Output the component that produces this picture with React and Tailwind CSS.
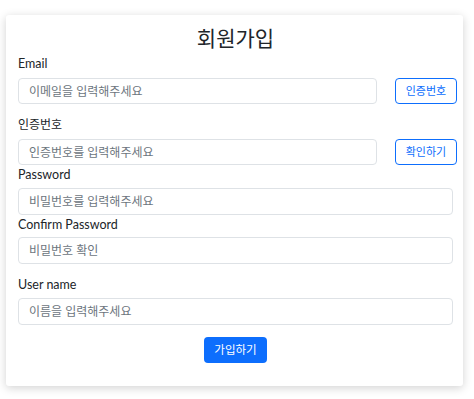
export default function App() {
  return (
    <div
      className="min-h-screen bg-white pt-[15px] pl-[6px]"
      style={{ fontFamily: 'Lato, "Noto Sans CJK KR", sans-serif' }}
    >
      {/* Card */}
      <div className="w-[457px] rounded-[3px] bg-white pt-[7px] pr-[10px] pb-[23px] pl-[12px] shadow-[0_2px_10px_rgba(0,0,0,0.18)]">
        <h1 className="h-[32px] text-center text-[21px] leading-[32px] text-[#212529]">회원가입</h1>

        {/* Email */}
        <label className="block h-[20px] text-[12.5px] leading-[20px] text-[#212529]">Email</label>
        <div className="mt-[4px] flex items-center">
          <input
            type="email"
            placeholder="이메일을 입력해주세요"
            className="h-[26px] w-[359px] shrink-0 rounded-[4px] border border-[#dee2e6] px-[10px] text-[12px] text-[#212529] outline-none placeholder:text-[#6c757d]"
          />
          <button className="ml-[18px] h-[26px] w-[62px] shrink-0 rounded-[4px] border border-[#0d6efd] text-[11px] text-[#0d6efd]">
            인증번호
          </button>
        </div>

        {/* Verification code */}
        <label className="mt-[11px] block h-[20px] text-[12px] leading-[20px] text-[#212529]">인증번호</label>
        <div className="mt-[4px] flex items-center">
          <input
            type="text"
            placeholder="인증번호를 입력해주세요"
            className="h-[26px] w-[359px] shrink-0 rounded-[4px] border border-[#dee2e6] px-[10px] text-[12px] text-[#212529] outline-none placeholder:text-[#6c757d]"
          />
          <button className="ml-[18px] h-[26px] w-[62px] shrink-0 rounded-[4px] border border-[#0d6efd] text-[11px] text-[#0d6efd]">
            확인하기
          </button>
        </div>

        {/* Password */}
        <label className="block h-[20px] text-[12.5px] leading-[20px] text-[#212529]">Password</label>
        <input
          type="password"
          placeholder="비밀번호를 입력해주세요"
          className="mt-[3px] block h-[27px] w-[435px] rounded-[4px] border border-[#dee2e6] px-[10px] text-[12px] text-[#212529] outline-none placeholder:text-[#6c757d]"
        />

        {/* Confirm Password */}
        <label className="block h-[20px] text-[12.5px] leading-[20px] text-[#212529]">Confirm Password</label>
        <input
          type="password"
          placeholder="비밀번호 확인"
          className="mt-[2px] block h-[27px] w-[435px] rounded-[4px] border border-[#dee2e6] px-[10px] text-[12px] text-[#212529] outline-none placeholder:text-[#6c757d]"
        />

        {/* User name */}
        <label className="mt-[11px] block h-[20px] text-[12.5px] leading-[20px] text-[#212529]">User name</label>
        <input
          type="text"
          placeholder="이름을 입력해주세요"
          className="mt-[3px] block h-[27px] w-[435px] rounded-[4px] border border-[#dee2e6] px-[10px] text-[12px] text-[#212529] outline-none placeholder:text-[#6c757d]"
        />

        {/* Submit */}
        <div className="mt-[12px] flex justify-center">
          <button className="h-[26px] w-[63px] rounded-[4px] bg-[#0d6efd] text-[11.5px] text-white">가입하기</button>
        </div>
      </div>
    </div>
  );
}
